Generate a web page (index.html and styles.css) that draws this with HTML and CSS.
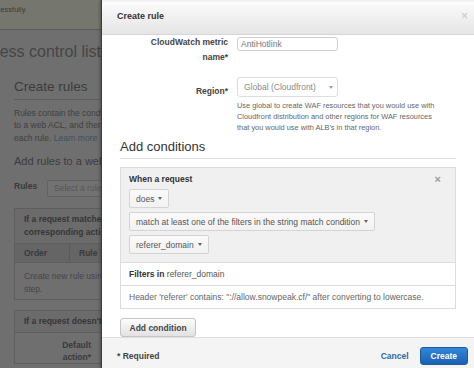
FILE: index.html
```html
<!DOCTYPE html>
<html lang="en">
  <head>
    <meta charset="UTF-8" />
    <meta name="viewport" content="width=device-width, initial-scale=1.0" />
    <title>Create rule</title>
    <link rel="stylesheet" href="styles.css">
  </head>
  <body>
    <!-- console page behind the dialog -->
    <div class="console">
      <div class="flash"><span>successfully.</span></div>
      <h1 class="page-title">Access control list</h1>

      <div class="step">
        <h2 class="step-title">Create rules</h2>
        <p class="step-text">
          Rules contain the conditions that you want to use to filter web requests. You add rules<br>
          to a web ACL, and then specify whether you want to allow or block requests based on<br>
          each rule. <a href="#">Learn more</a>
        </p>

        <h3 class="sub-title">Add rules to a web ACL</h3>
        <div class="rules-row">
          <div class="rules-label">Rules</div>
          <div class="rules-select">Select a rule</div>
        </div>

        <div class="panel">
          <div class="panel-head">
            If a request matches all of the conditions in a rule, take the<br>
            corresponding action
          </div>
          <div class="table-head">
            <div class="col-order">Order</div>
            <div class="col-rule">Rule</div>
          </div>
          <div class="panel-text">
            Create new rule using the Create rule button, or add rules created in the previous<br>
            step.
          </div>
        </div>

        <div class="panel">
          <div class="panel-head">If a request doesn't match any rules, take the default action</div>
          <div class="default-label">Default<br>action*</div>
        </div>
      </div>
    </div>

    <!-- dialog -->
    <div class="modal">
      <div class="modal-header">
        <div class="modal-title">Create rule</div>
        <div class="modal-close">&times;</div>
      </div>

      <div class="modal-body">
        <div class="field">
          <div class="field-label">CloudWatch metric name*</div>
          <div class="field-control">
            <div class="text-input">AntiHotlink</div>
          </div>
        </div>

        <div class="field field-region">
          <div class="field-label">Region*</div>
          <div class="field-control">
            <div class="select-input">
              <span>Global (Cloudfront)</span>
              <span class="caret"></span>
            </div>
            <p class="help">
              Use global to create WAF resources that you would use with
              Cloudfront distribution and other regions for WAF resources
              that you would use with ALB's in that region.
            </p>
          </div>
        </div>

        <h2 class="section-title">Add conditions</h2>

        <div class="condition">
          <div class="condition-head">
            <div class="condition-title">
              <span>When a request</span>
              <span class="condition-remove">&times;</span>
            </div>
            <div class="dropdown">does <span class="caret"></span></div>
            <div class="dropdown">match at least one of the filters in the string match condition <span class="caret"></span></div>
            <div class="dropdown">referer_domain <span class="caret"></span></div>
          </div>
          <div class="condition-row"><b>Filters in</b> referer_domain</div>
          <div class="condition-row filter-text">Header 'referer' contains: "://allow.snowpeak.cf/" after converting to lowercase.</div>
        </div>

        <button class="btn-add">Add condition</button>
      </div>

      <div class="modal-footer">
        <div class="required">* Required</div>
        <a class="cancel" href="#">Cancel</a>
        <button class="btn-create">Create</button>
      </div>
    </div>
  </body>
</html>
```

FILE: styles.css
```css
* {
  box-sizing: border-box;
}

html,
body {
  margin: 0;
  padding: 0;
}

body {
  width: 474px;
  height: 368px;
  overflow: hidden;
  position: relative;
  font-family: "Liberation Sans", Arial, sans-serif;
  background-color: #6f6f6f;
  color: #3a3a3a;
}

/* Background console page (dimmed, only the strip left of the dialog shows) */
.console {
  width: 102px;
  height: 368px;
  overflow: hidden;
  white-space: nowrap;
}

.flash {
  height: 30px;
  background-color: #75776e;
  border-bottom: 1px solid #5c5c5c;
  font-size: 7.5px;
  line-height: 20px;
  color: #3c3c3c;
}

.flash span {
  margin-left: -15px;
}

.page-title {
  margin: 0 0 0 -27px;
  padding-top: 12px;
  font-size: 16px;
  font-weight: normal;
  line-height: 20px;
  color: #454545;
}

.step {
  padding-left: 14px;
}

.step-title {
  margin: 16px 0 0;
  padding-bottom: 3px;
  font-size: 13.5px;
  font-weight: normal;
  line-height: 18px;
  color: #3c3c3c;
  border-bottom: 1px solid #5e5e5e;
}

.step-text {
  margin: 7px 0 0;
  font-size: 8.5px;
  line-height: 12.3px;
  color: #404040;
}

.step-text a {
  color: #3b5068;
  text-decoration: none;
}

.sub-title {
  margin: 10px 0 0;
  font-size: 11px;
  font-weight: normal;
  line-height: 14px;
  color: #3c3c3c;
}

.rules-row {
  display: flex;
  align-items: flex-start;
  margin-top: 12px;
}

.rules-label {
  flex: none;
  width: 33px;
  font-size: 8.5px;
  font-weight: bold;
  line-height: 12px;
}

.rules-select {
  flex: none;
  width: 200px;
  height: 17px;
  padding-left: 6px;
  border: 1px solid #616161;
  border-radius: 2px;
  background-color: #727272;
  font-size: 8.5px;
  line-height: 15px;
  color: #575757;
}

.panel {
  width: 300px;
  margin-top: 11px;
  border: 1px solid #5e5e5e;
  background-color: #6f6f6f;
}

.panel + .panel {
  margin-top: 10px;
}

.panel-head {
  padding: 4px 9px;
  background-color: #6b6b6b;
  border-bottom: 1px solid #5e5e5e;
  font-size: 8.5px;
  font-weight: bold;
  line-height: 13px;
  color: #363636;
}

.table-head {
  display: flex;
  height: 19px;
  background-color: #656565;
  border-bottom: 1px solid #5e5e5e;
  font-size: 8.5px;
  font-weight: bold;
  line-height: 18px;
}

.col-order {
  width: 55px;
  padding-left: 9px;
  border-right: 1px solid #5a5a5a;
}

.col-rule {
  padding-left: 9px;
}

.panel-text {
  padding: 7px 9px 3px;
  font-size: 8.5px;
  line-height: 13px;
  color: #464646;
}

.default-label {
  width: 76px;
  padding-top: 6px;
  text-align: right;
  font-size: 8.5px;
  font-weight: bold;
  line-height: 12px;
}

/* Dialog */
.modal {
  position: absolute;
  top: 0;
  left: 102px;
  right: 0;
  bottom: 0;
  display: flex;
  flex-direction: column;
  background-color: #fff;
  box-shadow: -1px 0 0 #3c3c3c, -2px 0 3px rgba(0, 0, 0, 0.3);
  color: #444;
}

.modal-header {
  flex: none;
  height: 35px;
  display: flex;
  justify-content: space-between;
  padding: 7px 6px 0 15px;
  background: linear-gradient(#fbfbfb, #e5e5e5);
  border-top: 2px solid #f3f3f3;
  border-bottom: 1px solid #d6d6d6;
}

.modal-title {
  font-size: 9px;
  font-weight: bold;
  line-height: 14px;
  color: #333;
}

.modal-close {
  font-size: 12px;
  line-height: 14px;
  color: #c6c6c6;
}

.modal-body {
  flex: 1;
  overflow: hidden;
  padding: 0 18px;
}

.field {
  display: flex;
  gap: 9px;
}

.field-region {
  margin-top: 12px;
}

.field-label {
  flex: none;
  width: 108px;
  padding-left: 28px;
  text-align: right;
  font-size: 8.5px;
  font-weight: bold;
  line-height: 15px;
  color: #444;
}

.field-region .field-label {
  padding-top: 6.5px;
}

.text-input {
  width: 101px;
  height: 14px;
  margin-top: 2px;
  padding: 0 3px;
  border: 1px solid #d0d0d0;
  border-radius: 3px;
  font-size: 8.5px;
  line-height: 12px;
  color: #777;
}

.select-input {
  width: 101px;
  height: 20px;
  display: flex;
  align-items: center;
  justify-content: space-between;
  padding: 0 4px 0 6px;
  border: 1px solid #dedede;
  border-radius: 3px;
  font-size: 8.5px;
  color: #8a8a8a;
}

.caret {
  display: inline-block;
  width: 0;
  height: 0;
  border-left: 2.5px solid transparent;
  border-right: 2.5px solid transparent;
  border-top: 3px solid #666;
  vertical-align: middle;
}

.select-input .caret {
  border-top-color: #9a9a9a;
}

.help {
  width: 202px;
  margin: 2.5px 0 0;
  font-size: 7.4px;
  line-height: 11px;
  color: #666;
}

.section-title {
  margin: 6.5px 0 0;
  padding-bottom: 3px;
  font-size: 13px;
  font-weight: normal;
  line-height: 16px;
  color: #333;
  border-bottom: 1px solid #dddddd;
}

.condition {
  margin-top: 8px;
  border: 1px solid #dcdcdc;
  font-size: 8.5px;
}

.condition-head {
  display: flex;
  flex-direction: column;
  align-items: flex-start;
  gap: 4px;
  padding: 6px 14px 8px 8px;
  background-color: #f0f0f0;
  border-bottom: 1px solid #dcdcdc;
}

.condition-title {
  align-self: stretch;
  display: flex;
  justify-content: space-between;
  font-weight: bold;
  line-height: 11px;
  color: #333;
}

.condition-remove {
  font-size: 11px;
  color: #9a9a9a;
}

.dropdown {
  height: 19px;
  display: flex;
  align-items: center;
  gap: 4px;
  padding: 0 6px;
  border: 1px solid #d4d4d4;
  border-radius: 2px;
  background: linear-gradient(#fafafa, #f2f2f2);
  color: #555;
}

.condition-row {
  padding: 0 8px;
  line-height: 22px;
  color: #555;
}

.condition-row b {
  color: #333;
}

.condition-row + .condition-row {
  border-top: 1px solid #dcdcdc;
}

.filter-text {
  color: #666;
}

.btn-add {
  margin-top: 9px;
  height: 19px;
  padding: 0 8.5px;
  border: 1px solid #c4c4c4;
  border-radius: 3px;
  background: linear-gradient(#fcfcfc, #e2e2e2);
  font-family: inherit;
  font-size: 8.5px;
  font-weight: bold;
  color: #444;
}

.modal-footer {
  flex: none;
  height: 31px;
  display: flex;
  align-items: center;
  padding: 5px 6px 0 15px;
  background-color: #f4f4f4;
  border-top: 1px solid #dedede;
  font-size: 8.5px;
}

.required {
  font-weight: bold;
  color: #444;
}

.cancel {
  margin-left: auto;
  font-weight: bold;
  color: #2d6aa6;
  text-decoration: none;
}

.btn-create {
  margin-left: 11px;
  height: 18px;
  padding: 0 10px;
  border: 1px solid #1d5b9c;
  border-radius: 3px;
  background: linear-gradient(#3088d8, #1b60b3);
  font-family: inherit;
  font-size: 8.5px;
  font-weight: bold;
  color: #fff;
}
```
